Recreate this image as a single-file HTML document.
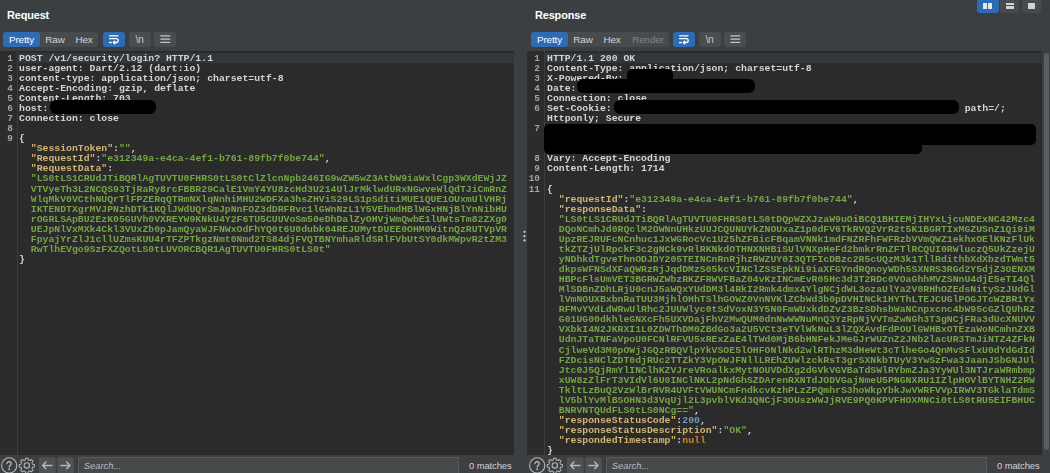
<!DOCTYPE html>
<html>
<head>
<meta charset="utf-8">
<title>Burp Repeater</title>
<style>
html,body{margin:0;padding:0;}
body{width:1050px;height:473px;overflow:hidden;background:#3c3f41;position:relative;font-family:"Liberation Sans",sans-serif;color:#e8e8e8;}
.abs{position:absolute;}
.title{position:absolute;top:8.2px;font-weight:bold;font-size:10.95px;line-height:14px;color:#ffffff;letter-spacing:-0.15px;}
.tabgrp{position:absolute;top:32px;height:15px;background:#484b4d;border-radius:3px;}
.tab{position:absolute;top:32px;height:15px;line-height:15.5px;font-size:9.9px;color:#d5d7d8;text-align:center;letter-spacing:-0.15px;}
.tab.sel{background:#2d6cb4;color:#ffffff;border-radius:3px;}
.tab.dis{color:#838588;}
.ibtn{position:absolute;top:32px;height:15px;width:22px;background:#4a4d4f;border-radius:3px;}
.ibtn.sel{background:#2d6cb4;}
.editor{position:absolute;top:51px;height:404px;background:#2b2b2b;overflow:hidden;}
.gutter{position:absolute;top:0;left:0;width:17px;height:404px;background:#2c2c2c;border-right:1px solid #3d3d3d;}
.hl{position:absolute;left:18px;right:0;top:1.5px;height:10.5px;background:#33363a;}
pre{margin:0;position:absolute;top:0;padding-top:2.7px;will-change:transform;font-family:"Liberation Mono",monospace;font-weight:bold;font-size:9.815px;line-height:10.07px;color:#d4d4d4;white-space:pre;letter-spacing:0;}
pre.ln{left:0;width:13px;text-align:right;color:#a2a4a6;font-weight:bold;font-size:9.4px;}
.k{color:#d0b574;}
.s{color:#74a446;}
.n{color:#6a9bc6;}
.u{color:#cf8236;}
.blk{position:absolute;background:#000;border-radius:5px;}
.bar{position:absolute;top:455px;height:18px;}
.search{position:absolute;top:457px;height:17px;background:#45494a;border:1px solid #585b5d;box-sizing:border-box;font-style:italic;font-size:9.4px;color:#b9bbbc;line-height:15.5px;padding-left:4.8px;}
.sbtn{position:absolute;top:443px;width:16px;height:15px;background:#4a4d4f;border-radius:2px;}
.matches{position:absolute;top:459px;font-size:9.45px;color:#d0d2d3;line-height:14px;letter-spacing:-0.1px;}
</style>
</head>
<body>

<!-- REQUEST PANEL -->
<div class="title" style="left:7px;">Request</div>
<div class="tabgrp" style="left:3px;width:95px;"></div>
<div class="tab sel" style="left:3px;width:37px;">Pretty</div>
<div class="tab" style="left:42px;width:26px;">Raw</div>
<div class="tab" style="left:72px;width:24px;">Hex</div>
<div class="ibtn sel" style="left:102.5px;"><svg width="22" height="15.5" viewBox="0 0 22 15.5" style="position:absolute;left:0;top:0"><g fill="none" stroke="#ffffff" stroke-width="1.3" stroke-linecap="round" stroke-linejoin="round"><path d="M6.6 3.8H15"/><path d="M6.6 6.7H13.3a1.9 1.9 0 0 1 0 3.8H10.6"/><path d="M11.8 9.1L10.3 10.5L11.8 11.9"/><path d="M6.6 10.5H8.2"/></g></svg></div>
<div class="ibtn" style="left:128.5px;"><div style="position:absolute;left:0;top:0;width:22px;height:15.5px;line-height:15px;text-align:center;font-size:10.5px;color:#c3c5c6;letter-spacing:-0.3px;">\n</div></div>
<div class="ibtn" style="left:154px;"><svg width="22" height="15.5" viewBox="0 0 22 15.5" style="position:absolute;left:0;top:0"><g fill="none" stroke="#c3c5c6" stroke-width="1.2" stroke-linecap="round"><path d="M6.8 3.9H15.8"/><path d="M6.8 7.1H15.8"/><path d="M6.8 10.4H15.8"/></g></svg></div>

<div class="editor" id="req" style="left:0;width:514px;">
<div class="gutter"></div>
<div class="hl"></div>
<pre class="ln">1
2
3
4
5
6
7
8
9</pre>
<pre style="left:19px;">POST /v1/security/login? HTTP/1.1
user-agent: Dart/2.12 (dart:io)
content-type: application/json; charset=utf-8
Accept-Encoding: gzip, deflate
Content-Length: 703
host:
Connection: close

{
  <span class="k">"SessionToken"</span>:<span class="s">""</span>,
  <span class="k">"RequestId"</span>:<span class="s">"e312349a-e4ca-4ef1-b761-89fb7f0be744"</span>,
  <span class="k">"RequestData"</span>:
<span class="s">  "LS0tLS1CRUdJTiBQRlAgTUVTU0FHRS0tLS0tClZlcnNpb246IG9wZW5wZ3AtbW9iaWxlCgp3WXdEWjJZ
  VTVyeTh3L2NCQS93TjRaRy8rcFBBR29CalE1VmY4YU8zcHd3U214UlJrMklwdURxNGwveWlQdTJiCmRnZ
  WlqMkV0VCthNUQrTlFPZERqQTRmNXlqNnhiMHU2WDFXa3hsZHViS29LS1pSditiMUE1QUE1OUxmUlVHRj
  IKTENDTXgrMVJPNzhDTk1KQlJWdUQrSmJpNnFOZ3dDRFRvc1lGWnNzL1Y5VEhmdHBlWGxHNjBlYnNibHU
  rOGRLSApBU2EzK05GUVh0VXREYW9KNkU4Y2F6TU5CUUVoSm50eDhDalZyOHVjWmQwbE1lUWtsTm82ZXg0
  UEJpNlVxMXk4Ckl3VUxZb0pJamQyaWJFNWxOdFhYQ0t6U0dubk04REJUMytDUEE0OHM0WitnQzRUTVpVR
  FpyajYrZlJ1cllUZmsKUU4rTFZPTkgzNmt0Nmd2TS84djFVQTBNYmhaRldSRlFVbUtSY0dkMWpvR2tZM3
  RwTlhEVgo9SzFXZQotLS0tLUVORCBQR1AgTUVTU0FHRS0tLS0t"</span>
}</pre>
<div class="blk" style="left:50px;top:49px;width:105.5px;height:14px;border-radius:6px;"></div>
</div>

<!-- REQUEST BOTTOM BAR -->
<svg class="abs" style="left:0px;top:456px;" width="76" height="17" viewBox="0 0 76 17">
<g fill="none" stroke="#b4b6b8" stroke-width="1.1" stroke-linecap="round" stroke-linejoin="round">
<circle cx="9.2" cy="9.4" r="7.6"/>
<path d="M7.2 7.6a2 2 0 1 1 3.1 1.7c-0.8 0.5-1.1 0.9-1.1 1.8" stroke-width="1.4"/>
<circle cx="9.2" cy="13.3" r="0.45" fill="#b4b6b8"/>
<circle cx="26.8" cy="9.4" r="2.7"/>
<path d="M25.5 1.9h2.6l0.4 2 1.5 0.65 1.7-1.15 1.85 1.85-1.15 1.7 0.65 1.5 2 0.4v2.6l-2 0.4-0.65 1.5 1.15 1.7-1.85 1.85-1.7-1.15-1.5 0.65-0.4 2h-2.6l-0.4-2-1.5-0.65-1.7 1.15-1.85-1.85 1.15-1.7-0.65-1.5-2-0.4v-2.6l2-0.4 0.65-1.5-1.15-1.7 1.85-1.85 1.7 1.15 1.5-0.65z" transform="translate(26.8 9.4) scale(0.92) translate(-26.8 -9.8)"/>
</g>
<rect x="38.8" y="1.2" width="16.8" height="17" rx="2.5" fill="#4d5153"/>
<rect x="57.2" y="1.2" width="16.6" height="17" rx="2.5" fill="#4d5153"/>
<g fill="none" stroke="#b4b6b8" stroke-width="1.45" stroke-linecap="round" stroke-linejoin="round">
<path d="M51.8 9.4H42.6M45.9 6L42.6 9.4L45.9 12.8"/>
<path d="M60.8 9.4H70M66.7 6L70 9.4L66.7 12.8"/>
</g>
</svg>
<div class="search" style="left:78px;width:381px;">Search...</div>
<div class="matches" style="left:469px;">0 matches</div>

<!-- DIVIDER -->
<div class="abs" style="left:514px;top:51px;width:13px;height:404px;background:#3c3f41;"></div>


<!-- LAYOUT BUTTONS -->
<div class="abs" style="left:977px;top:-3px;width:21.6px;height:16px;background:#2d6cb4;border-radius:3px;"></div>
<div class="abs" style="left:1000.4px;top:-3px;width:19px;height:16px;background:#484b4d;border-radius:3px;"></div>
<div class="abs" style="left:1021.6px;top:-3px;width:19.4px;height:16px;background:#484b4d;border-radius:3px;"></div>
<div class="abs" style="left:983.3px;top:2.6px;width:4px;height:6px;background:#e4e8ee;"></div>
<div class="abs" style="left:988.3px;top:2.6px;width:4px;height:6px;background:#e4e8ee;"></div>
<div class="abs" style="left:1005.8px;top:2.6px;width:8px;height:2.5px;background:#d0d2d3;"></div>
<div class="abs" style="left:1005.8px;top:6.1px;width:8px;height:2.5px;background:#d0d2d3;"></div>
<div class="abs" style="left:1027.7px;top:2.6px;width:7.8px;height:6px;background:#d0d2d3;"></div>

<!-- RESPONSE PANEL -->
<div class="title" style="left:535px;">Response</div>
<div class="tabgrp" style="left:531px;width:138px;"></div>
<div class="tab sel" style="left:531px;width:37px;">Pretty</div>
<div class="tab" style="left:570px;width:26px;">Raw</div>
<div class="tab" style="left:600px;width:24px;">Hex</div>
<div class="tab dis" style="left:629px;width:38px;">Render</div>
<div class="ibtn sel" style="left:672.5px;"><svg width="22" height="15.5" viewBox="0 0 22 15.5" style="position:absolute;left:0;top:0"><g fill="none" stroke="#ffffff" stroke-width="1.3" stroke-linecap="round" stroke-linejoin="round"><path d="M6.6 3.8H15"/><path d="M6.6 6.7H13.3a1.9 1.9 0 0 1 0 3.8H10.6"/><path d="M11.8 9.1L10.3 10.5L11.8 11.9"/><path d="M6.6 10.5H8.2"/></g></svg></div>
<div class="ibtn" style="left:698.5px;"><div style="position:absolute;left:0;top:0;width:22px;height:15.5px;line-height:15px;text-align:center;font-size:10.5px;color:#c3c5c6;letter-spacing:-0.3px;">\n</div></div>
<div class="ibtn" style="left:724px;"><svg width="22" height="15.5" viewBox="0 0 22 15.5" style="position:absolute;left:0;top:0"><g fill="none" stroke="#c3c5c6" stroke-width="1.2" stroke-linecap="round"><path d="M6.8 3.9H15.8"/><path d="M6.8 7.1H15.8"/><path d="M6.8 10.4H15.8"/></g></svg></div>

<div class="editor" id="res" style="left:527px;width:514.5px;">
<div class="gutter"></div>
<div class="hl"></div>
<pre class="ln">1
2
3
4
5
6

7


8
9
10
11</pre>
<pre style="left:20px;">HTTP/1.1 200 OK
Content-Type: application/json; charset=utf-8
X-Powered-By:
Date:
Connection: close
Set-Cookie:<span style="display:inline-block;width:353px;"></span>path=/;
Httponly; Secure



Vary: Accept-Encoding
Content-Length: 1714

{
  <span class="k">"requestId"</span>:<span class="s">"e312349a-e4ca-4ef1-b761-89fb7f0be744"</span>,
  <span class="k">"responseData"</span>:
<span class="s">  "LS0tLS1CRUdJTiBQRlAgTUVTU0FHRS0tLS0tDQpWZXJzaW9uOiBCQ1BHIEMjIHYxLjcuNDExNC42Mzc4
  DQoNCmhJd0RQclM2OWNnUHkzUUJCQUNUYkZNOUxaZ1p0dFV6TkRVQ2VrR2t5K1BGRTIxMGZUSnZ1Qi9iM
  UpzREJRUFcNCnhuc1JxWGRocVc1U25hZFBicFBqamVNNk1mdFNZRFhFWFRzbVVmQWZ1ekhxOElKNzFlUk
  tkZTZjUlRpckF3c2gNCk9vRlRKNkdOTHNXNHBiSUlVNXpHeFd2bmkrRnZFTlRCQUI0RWluczQ5UkZzejU
  yNDhkdTgveThnODJDY205TEINCnRnRjhzRWZUY0I3QTFIcDBzc2R5cUQzM3k1TllRdithbXdXbzdTWmt5
  dkpsWFNSdXFaQWRzRjJqdDMzS05kcVINClZSSEpkNi9iaXFGYndRQnoyWDh5SXNRS3RGd2Y5djZ3OENXM
  HBPcFlsUmVET3BGRWZWbzRKZFRWVFBaZ04vKzINCmEvR05Hc3d3T2RDc0VOaGhhMVZSNnU4djE5eTI4Ql
  MlSDBnZDhLRjU0cnJ5aWQxYUdDM3l4RkI2Rmk4dmx4YlgNCjdWL3ozaUlYa2V0RHhOZEdsNitySzJUdGl
  lVmNOUXBxbnRaTUU3MjhlOHhTSlhGOWZ0VnNVKlZCbWd3b0pDVHINCk1HYThLTEJCUGlPOGJTcWZBR1Yx
  RFMvYVdLdWRwUlRhc2JUUWlyc0tSdVoxN3Y5N0FmWUxkdDZvZ3BzSDhsbWaNCnpxcnc4bW95cGZlQUhRZ
  G01UG00dkhleGNXcFh5UXVDajFhV2MwQUM0dnNwWWNuMnQ3YzRpNjVVTmZwNGh3T3gNCjFRa3dUcXNUVV
  VXbkI4N2JKRXI1L0ZDWThDM0ZBdGo3a2U5VCt3eTVlWkNuL3lZQXAvdFdPOUlGWHBxOTEzaWoNCmhnZXB
  UdnJTaTNFaVpoU0FCNlRFVU5xRExZaE4lTWd0MjB6bHNFekJMeGJrWUZnZ2JNb2lacUR3TmJiNTZ4ZFkN
  CjlweVd3M0pOWjJGQzRBQVlpYkVSOE5lOHFONlNkd2wlRThzM3dHeWt3cTlheGo4QnMvSFlxU0dYdGdId
  FZDcisNClZDT0djRUc2TTZkY3VpOWJFNllLREhZUWlzckRsT3grSXNkbTUyV3YwSzFwa3JaanJSbGNJUl
  Jtc0J5QjRmYlINClhKZVJreVRoalkxMytNOUVDdXg2dGVkVGVBaTdSWlRYbmZJa3YyWUl3NTJraWRmbmp
  xUW8zZlFrT3VIdVl6U0INClNKL2pNdGhSZDArenRXNTdJODVGajNmeU5PNGNXRU1IZlpHOVlBYTNHZ2RW
  TkltLzBuQ2VzWlBrRVR4UVFtVWUNCmFndkcvKzhPLzZPQmhrS3hoWkpYbkJwVWRFVVpIRWV3TGklaTdmS
  lV5blYvMlBSOHN3d3VqUjl2L3pvblVKd3QNCjF3OUszWWJjRVE9PQ0KPVFHOXMNCi0tLS0tRU5EIFBHUC
  BNRVNTQUdFLS0tLS0NCg=="</span>,
  <span class="k">"responseStatusCode"</span>:<span class="n">200</span>,
  <span class="k">"responseStatusDescription"</span>:<span class="s">"OK"</span>,
  <span class="k">"respondedTimestamp"</span>:<span class="u">null</span>
}</pre>
<div class="blk" style="left:99.5px;top:18px;width:46px;height:14px;border-radius:5px;"></div>
<div class="blk" style="left:50px;top:28px;width:177.5px;height:14px;border-radius:6px;"></div>
<div class="blk" style="left:86.8px;top:49px;width:345px;height:14px;border-radius:6px;"></div>
<div class="blk" style="left:17px;top:72.5px;width:491.6px;height:21.2px;border-radius:5px;"></div>
<div class="blk" style="left:17px;top:80px;width:378px;height:23px;border-radius:5px;"></div>
</div>


<!-- SCROLLBAR / DIVIDER DOTS -->
<svg class="abs" style="left:520px;top:228px;" width="10" height="16" viewBox="0 0 10 16"><g fill="#cfd1d2"><circle cx="4.5" cy="3.8" r="1.15"/><circle cx="4.5" cy="8.1" r="1.15"/><circle cx="4.5" cy="12.4" r="1.15"/></g></svg>
<div class="abs" style="left:1043.7px;top:52.5px;width:5.6px;height:397.5px;background:#5b5f61;border-radius:3px;"></div>

<!-- RESPONSE BOTTOM BAR -->
<svg class="abs" style="left:527.7px;top:456px;" width="76" height="17" viewBox="0 0 76 17">
<g fill="none" stroke="#b4b6b8" stroke-width="1.1" stroke-linecap="round" stroke-linejoin="round">
<circle cx="9.2" cy="9.4" r="7.6"/>
<path d="M7.2 7.6a2 2 0 1 1 3.1 1.7c-0.8 0.5-1.1 0.9-1.1 1.8" stroke-width="1.4"/>
<circle cx="9.2" cy="13.3" r="0.45" fill="#b4b6b8"/>
<circle cx="26.8" cy="9.4" r="2.7"/>
<path d="M25.5 1.9h2.6l0.4 2 1.5 0.65 1.7-1.15 1.85 1.85-1.15 1.7 0.65 1.5 2 0.4v2.6l-2 0.4-0.65 1.5 1.15 1.7-1.85 1.85-1.7-1.15-1.5 0.65-0.4 2h-2.6l-0.4-2-1.5-0.65-1.7 1.15-1.85-1.85 1.15-1.7-0.65-1.5-2-0.4v-2.6l2-0.4 0.65-1.5-1.15-1.7 1.85-1.85 1.7 1.15 1.5-0.65z" transform="translate(26.8 9.4) scale(0.92) translate(-26.8 -9.8)"/>
</g>
<rect x="38.8" y="1.2" width="16.8" height="17" rx="2.5" fill="#4d5153"/>
<rect x="57.2" y="1.2" width="16.6" height="17" rx="2.5" fill="#4d5153"/>
<g fill="none" stroke="#b4b6b8" stroke-width="1.45" stroke-linecap="round" stroke-linejoin="round">
<path d="M51.8 9.4H42.6M45.9 6L42.6 9.4L45.9 12.8"/>
<path d="M60.8 9.4H70M66.7 6L70 9.4L66.7 12.8"/>
</g>
</svg>
<div class="search" style="left:606px;width:381px;">Search...</div>
<div class="matches" style="left:997px;">0 matches</div>

</body>
</html>
